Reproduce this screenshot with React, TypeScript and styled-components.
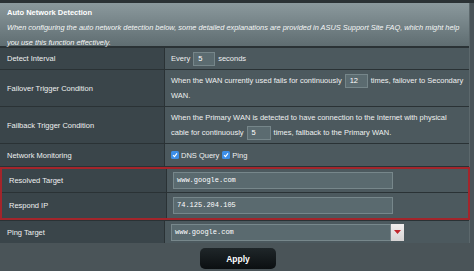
import styled, { createGlobalStyle } from "styled-components";

const Global = createGlobalStyle`
	html, body {
		margin: 0;
		padding: 0;
		background: #4a5458;
	}
	body {
		font-family: "Liberation Sans", Arial, sans-serif;
		font-size: 7.5px;
		color: #eef0f0;
		overflow: hidden;
	}
`;

const Page = styled.div`
	width: 474px;
	height: 271px;
	border-top: 3px solid #2b3235;
	box-sizing: border-box;
	background: #4a5458;
`;

const Panel = styled.div`
	width: 469px;
	border-right: 1px solid #5c686c;
	background: #2a3235;
	display: flex;
	flex-direction: column;
	gap: 1px;
`;

const Header = styled.div`
	height: 44px;
	box-sizing: border-box;
	padding: 4px 1px 0 7px;
	background: linear-gradient(#8b999d, #5f6d71);
	border-bottom: 1px solid #2a3235;
`;

const Title = styled.div`
	font-weight: bold;
	font-size: 7.5px;
	line-height: 11px;
	color: #ffffff;
`;

const Desc = styled.div`
	font-style: italic;
	font-size: 7.4px;
	line-height: 15px;
	margin-top: 2px;
	color: #f4f6f6;
`;

const Row = styled.div<{ $h: number }>`
	display: grid;
	grid-template-columns: 164px 1fr;
	column-gap: 1px;
	height: ${(p) => p.$h}px;
`;

const Label = styled.div`
	background: #3a454a;
	display: flex;
	align-items: center;
	padding-left: 7px;
`;

const Value = styled.div`
	background: #4c595e;
	padding: 0 3px 0 6px;
	display: flex;
	align-items: center;
	line-height: 15px;
`;

const Para = styled.div`
	line-height: 15px;
`;

const SmallInput = styled.span<{ $w: number }>`
	display: inline-block;
	vertical-align: middle;
	width: ${(p) => p.$w}px;
	height: 14px;
	box-sizing: border-box;
	margin: -1px 3px;
	padding-left: 4px;
	background: #5b6b70;
	border: 1px solid #76868a;
	line-height: 12px;
	color: #ffffff;
`;

const Highlight = styled.div`
	border: 2px solid #a3252b;
	margin: 0 -1px 0 0;
	display: flex;
	flex-direction: column;
	gap: 1px;
	background: #2a3235;
`;

const Field = styled.div`
	width: 220px;
	height: 17px;
	box-sizing: border-box;
	background: #5a6a6f;
	border: 1px solid #77878b;
	font-family: "Liberation Mono", "Courier New", monospace;
	font-size: 7px;
	line-height: 15px;
	padding-left: 3px;
	color: #ffffff;
`;

const Select = styled.div`
	display: flex;
	align-items: center;
`;

const Drop = styled.div`
	width: 13px;
	height: 17px;
	background: linear-gradient(#f1eeee, #d7d4d4);
	display: flex;
	align-items: center;
	justify-content: center;
`;

const Check = styled.span`
	display: inline-flex;
	width: 8px;
	height: 8px;
	border-radius: 1.5px;
	background: #3d8ee8;
	margin-right: 2px;
	align-items: center;
	justify-content: center;
`;

const CheckLabel = styled.span`
	display: inline-flex;
	align-items: center;
	margin-right: 3px;
`;

const ButtonBar = styled.div`
	display: flex;
	justify-content: center;
	padding: 5px 0 0 2px;
`;

const Apply = styled.button`
	width: 76px;
	height: 21px;
	border: none;
	border-radius: 5px;
	background: linear-gradient(#1f2629, #0b0f11);
	color: #ffffff;
	font-family: "Liberation Sans", Arial, sans-serif;
	font-weight: bold;
	font-size: 8.5px;
`;

const Tick = () => (
	<svg width="6" height="6" viewBox="0 0 6 6">
		<path d="M1 3.2 L2.5 4.6 L5 1.4" stroke="#fff" strokeWidth="1.1" fill="none" />
	</svg>
);

export default function App() {
	return (
		<Page>
			<Global />
			<Panel>
				<Header>
					<Title>Auto Network Detection</Title>
					<Desc>
						When configuring the auto network detection below, some detailed
						explanations are provided in ASUS Support Site FAQ, which might help
						you use this function effectively.
					</Desc>
				</Header>
				<Row $h={21}>
					<Label>Detect Interval</Label>
					<Value>
						Every<SmallInput $w={22}>5</SmallInput>seconds
					</Value>
				</Row>
				<Row $h={36}>
					<Label>Failover Trigger Condition</Label>
					<Value>
						<Para>
							When the WAN currently used fails for continuously
							<SmallInput $w={23}>12</SmallInput>times, failover to Secondary
							<br />
							WAN.
						</Para>
					</Value>
				</Row>
				<Row $h={36}>
					<Label>Failback Trigger Condition</Label>
					<Value>
						<Para>
							When the Primary WAN is detected to have connection to the
							Internet with physical
							<br />
							cable for continuously
							<SmallInput $w={24}>5</SmallInput>times, fallback to the Primary
							WAN.
						</Para>
					</Value>
				</Row>
				<Row $h={22}>
					<Label>Network Monitoring</Label>
					<Value>
						<CheckLabel>
							<Check>
								<Tick />
							</Check>
							DNS Query
						</CheckLabel>
						<CheckLabel>
							<Check>
								<Tick />
							</Check>
							Ping
						</CheckLabel>
					</Value>
				</Row>
				<Highlight>
					<Row $h={23}>
						<Label>Resolved Target</Label>
						<Value>
							<Field>www.google.com</Field>
						</Value>
					</Row>
					<Row $h={25}>
						<Label>Respond IP</Label>
						<Value>
							<Field>74.125.204.105</Field>
						</Value>
					</Row>
				</Highlight>
				<Row $h={22}>
					<Label>Ping Target</Label>
					<Value>
						<Select>
							<Field>www.google.com</Field>
							<Drop>
								<svg width="7" height="4" viewBox="0 0 7 4">
									<path d="M0 0 H7 L3.5 4 Z" fill="#c0262c" />
								</svg>
							</Drop>
						</Select>
					</Value>
				</Row>
			</Panel>
			<ButtonBar>
				<Apply>Apply</Apply>
			</ButtonBar>
		</Page>
	);
}
